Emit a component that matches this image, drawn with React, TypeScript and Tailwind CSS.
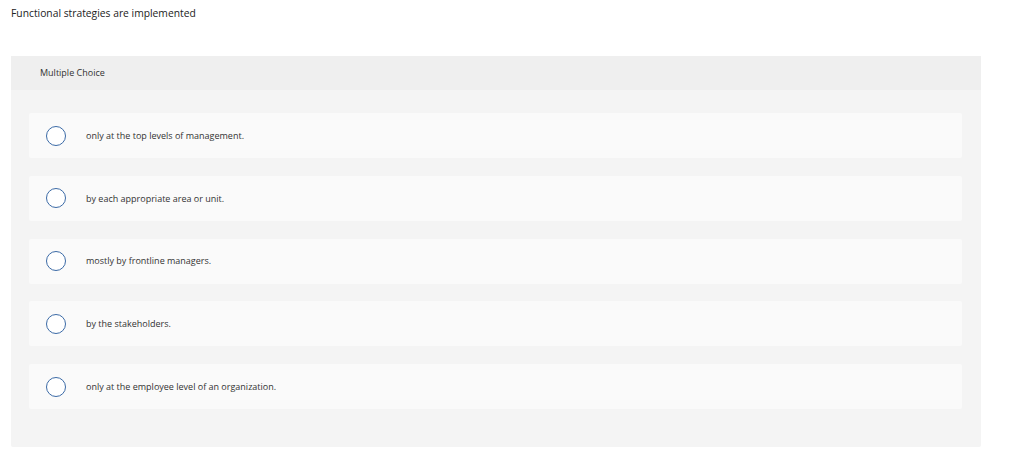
import React from "react";

const options = [
  "only at the top levels of management.",
  "by each appropriate area or unit.",
  "mostly by frontline managers.",
  "by the stakeholders.",
  "only at the employee level of an organization.",
];

export default function App() {
  return (
    <div className="w-[1024px] h-[472px] bg-white text-[#222] font-['Open_Sans','Liberation_Sans',sans-serif]">
      <div className="pl-[11px] pt-[7px] h-[56px] text-[10.3px] leading-[13px]">
        Functional strategies are implemented
      </div>
      <div className="ml-[11px] w-[970px] h-[391px] rounded-[2px] bg-[#f4f4f4]">
        <div className="h-[34px] bg-[#efefef] pl-[29px] flex items-center text-[9px] text-[#333]">
          Multiple Choice
        </div>
        <div className="pt-[23px] pl-[18px] pr-[19px] flex flex-col gap-[17.75px]">
          {options.map((o) => (
            <div
              key={o}
              className="h-[45px] bg-[#fafafa] rounded-[2px] flex items-center pl-[17px]"
            >
              <span className="w-[20px] h-[20px] rounded-full border border-[#3b6aa6] bg-white shrink-0" />
              <span className="ml-[20px] text-[9px] text-[#333]">{o}</span>
            </div>
          ))}
        </div>
      </div>
    </div>
  );
}
